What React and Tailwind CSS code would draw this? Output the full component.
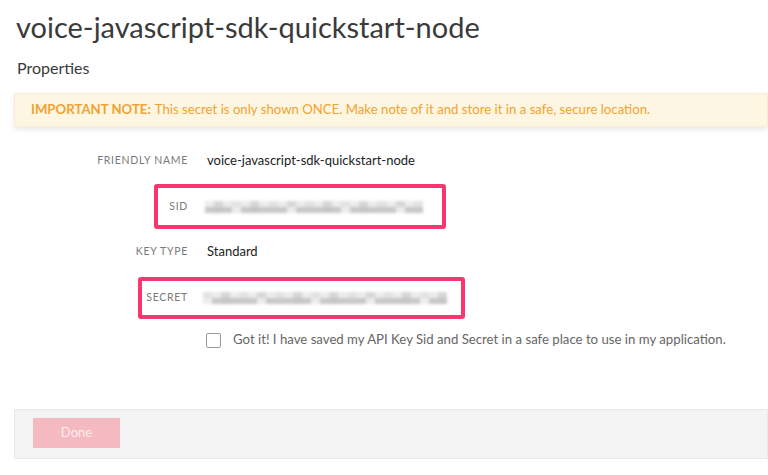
import React from 'react';

const TONES = ['bg-[#e4e4e4]', 'bg-[#d6d6d6]', 'bg-[#c8c8c8]', 'bg-[#e2e2e2]', 'bg-[#c4c4c4]', 'bg-[#ececec]'];

function Blurred({ width, seed }) {
  const cells = Math.floor(width / 9);
  const top = [];
  const bottom = [];
  for (let i = 0; i < cells; i++) {
    top.push(TONES[(i * 7 + seed) % 4 === 0 ? 1 : (i + seed) % 2 === 0 ? 3 : 5]);
    bottom.push(TONES[(i * 5 + seed * 3) % 6 === 0 ? 5 : (i * 3 + seed) % 4 === 0 ? 4 : 2]);
  }
  return (
    <div className="flex flex-col blur-[1.6px]" style={{ width }}>
      <div className="flex h-[6px]">
        {top.map((c, i) => (
          <div key={i} className={`flex-1 ${c}`} />
        ))}
      </div>
      <div className="flex h-[6px]">
        {bottom.map((c, i) => (
          <div key={i} className={`flex-1 ${c}`} />
        ))}
      </div>
    </div>
  );
}

const labelCls = 'text-[10.5px] tracking-[0.7px] uppercase text-[#7a7a7a] text-right';

export default function App() {
  return (
    <div className="w-[768px] h-[475px] bg-white overflow-hidden font-['Lato','Open_Sans',sans-serif]">
      <h1 className="pl-[16px] pt-[10px] text-[29px] leading-[34px] text-[#3a3a3a] font-normal">
        voice-javascript-sdk-quickstart-node
      </h1>
      <h2 className="pl-[17px] mt-[14px] text-[16px] leading-[20px] text-[#3a3a3a]">Properties</h2>

      <div className="ml-[14px] mt-[15px] h-[34px] flex items-center pl-[16px] bg-[#fdf6e2] border border-[#f8edd0] shadow-[0_3px_5px_rgba(0,0,0,0.08)] text-[13.2px] text-[#f2a231] whitespace-nowrap">
        <span className="font-bold mr-[4px]">IMPORTANT NOTE:</span>
        This secret is only shown ONCE. Make note of it and store it in a safe, secure location.
      </div>

      <div className="mt-[24px] flex items-center h-[20px]">
        <div className={`w-[188px] ${labelCls}`}>Friendly Name</div>
        <div className="ml-[19px] text-[13px] text-[#222]">voice-javascript-sdk-quickstart-node</div>
      </div>

      <div className="mt-[13px] ml-[154px] w-[292px] h-[45px] border-4 border-[#fb3570] rounded-[3px] flex items-center">
        <div className={`w-[30px] ${labelCls}`}>SID</div>
        <div className="ml-[17px]">
          <Blurred width={218} seed={1} />
        </div>
      </div>

      <div className="mt-[13px] flex items-center h-[20px]">
        <div className={`w-[188px] ${labelCls}`}>Key Type</div>
        <div className="ml-[19px] text-[13px] text-[#222]">Standard</div>
      </div>

      <div className="mt-[15px] ml-[138px] w-[327px] h-[42px] border-4 border-[#fb3570] rounded-[3px] flex items-center">
        <div className={`w-[46px] ${labelCls}`}>Secret</div>
        <div className="ml-[15px]">
          <Blurred width={244} seed={2} />
        </div>
      </div>

      <div className="mt-[11px] flex items-center h-[20px] pl-[206px]">
        <div className="w-[15px] h-[15px] border border-[#9a9a9a] rounded-[2px] bg-white" />
        <span className="ml-[12px] text-[13.2px] text-[#666]">
          Got it! I have saved my API Key Sid and Secret in a safe place to use in my application.
        </span>
      </div>

      <div className="mt-[59px] ml-[14px] h-[50px] bg-[#f4f4f4] border border-[#e9e9e9] pl-[18px] pt-[8px]">
        <button className="w-[87px] h-[30px] bg-[#f5b9c2] text-[13px] text-white/75">Done</button>
      </div>
    </div>
  );
}
